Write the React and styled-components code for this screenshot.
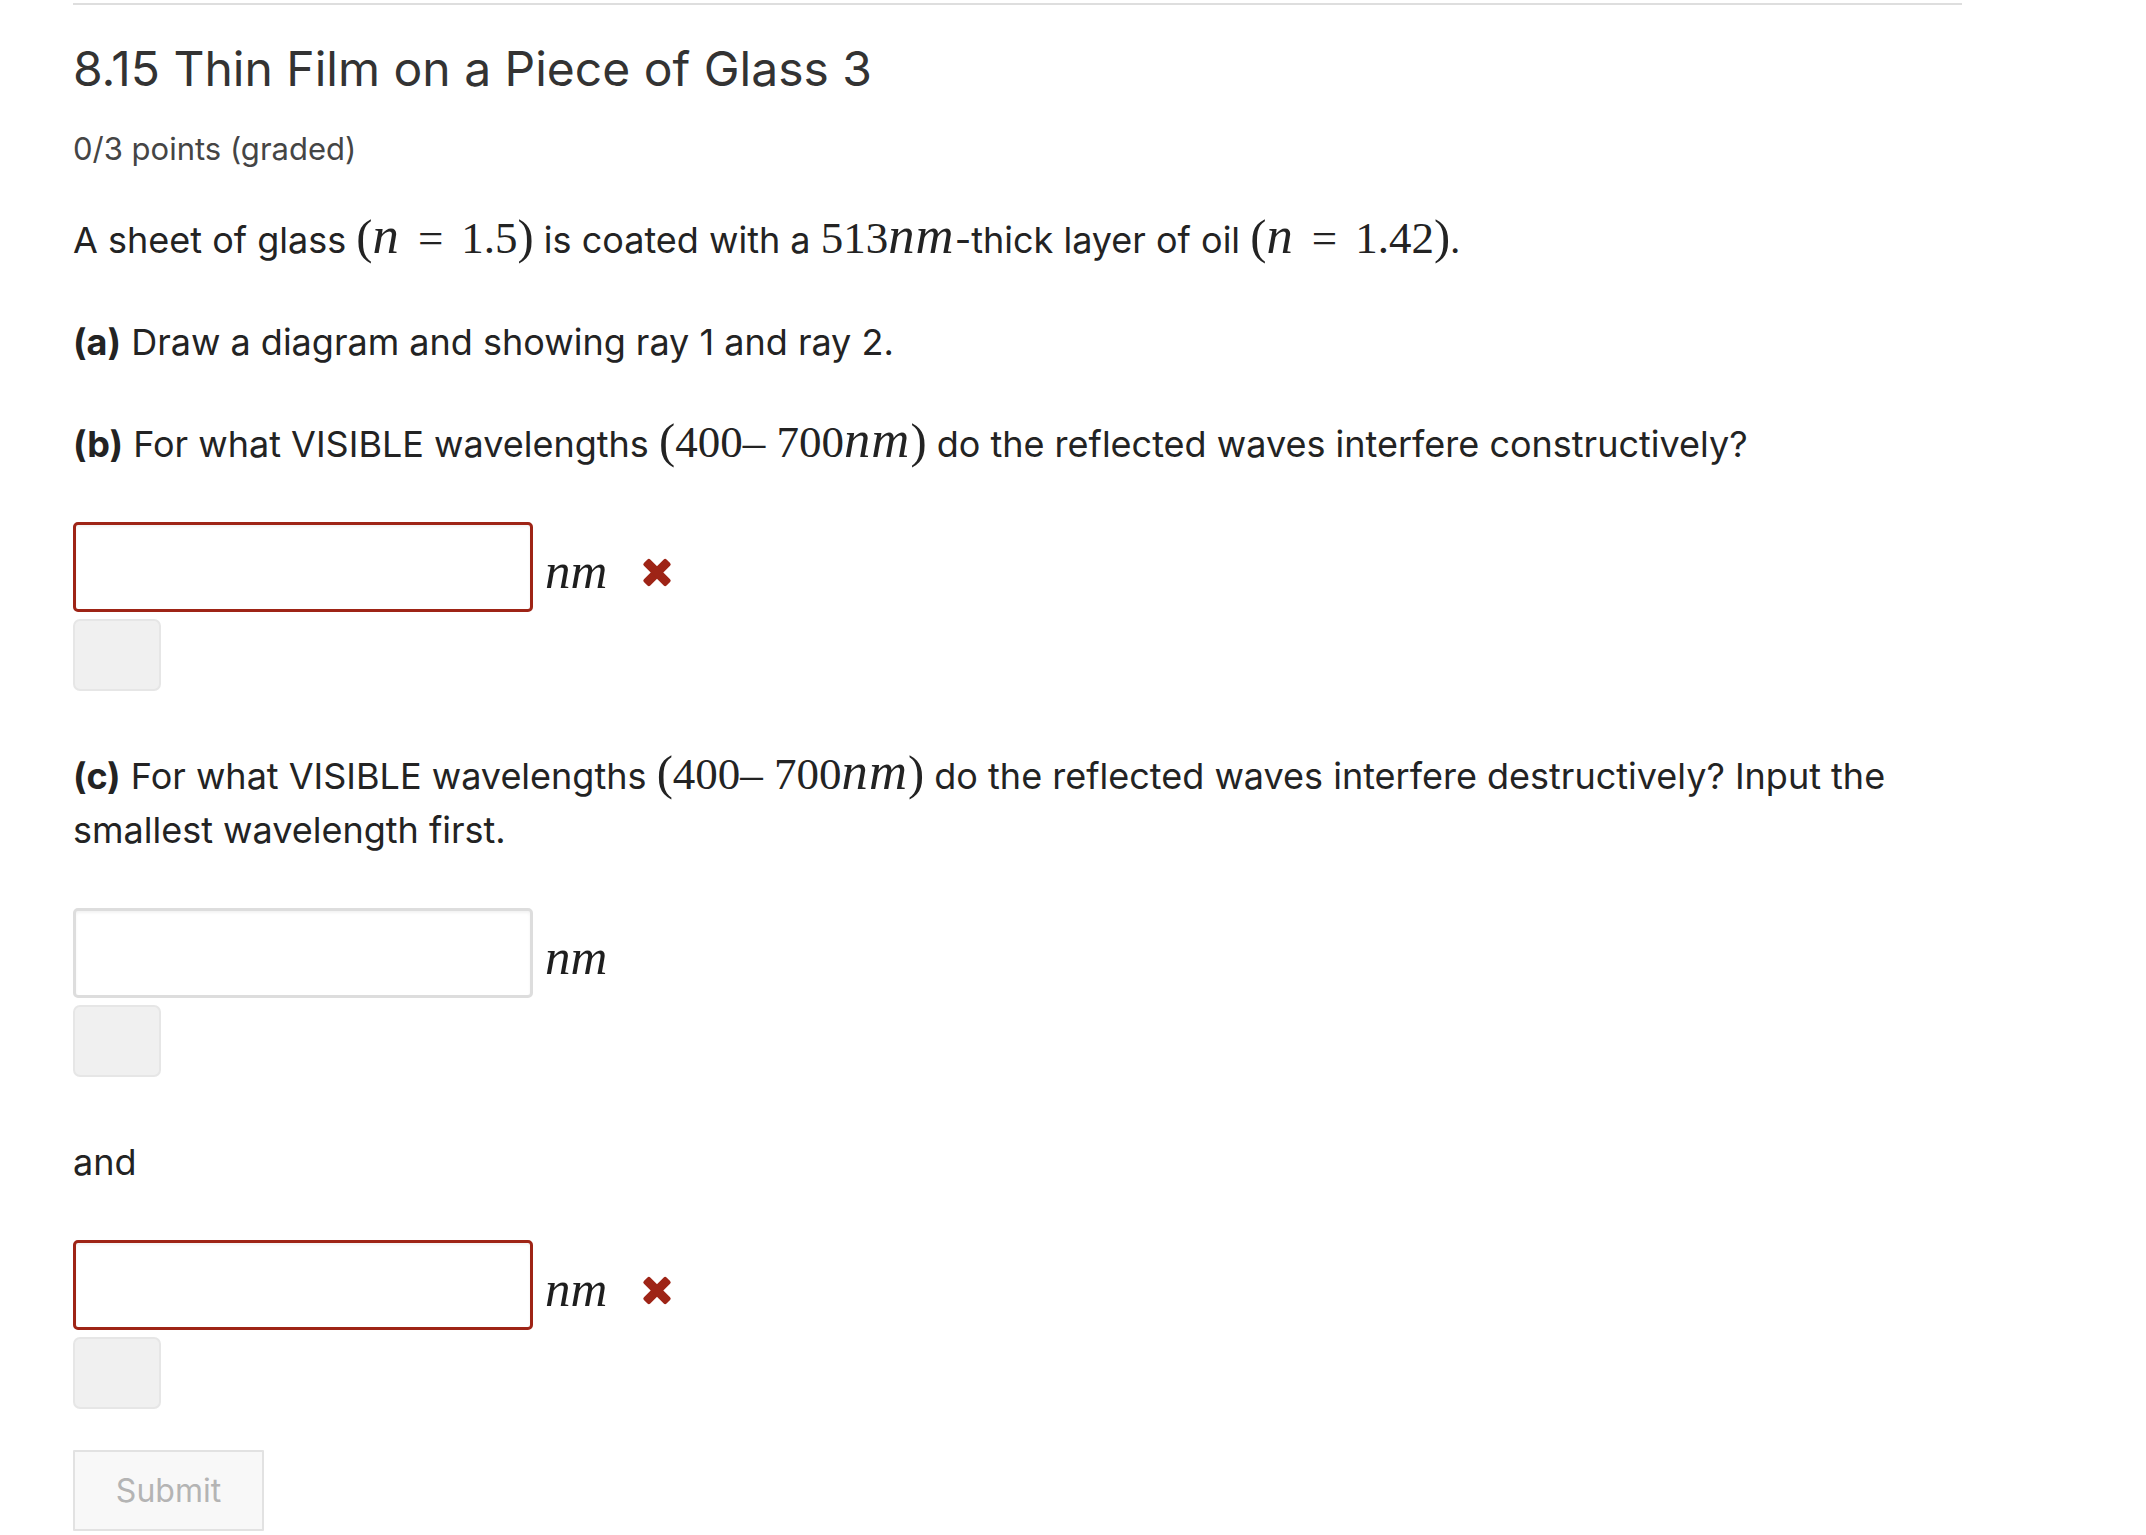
import React from "react"
import styled, { createGlobalStyle } from "styled-components"

const GlobalStyle = createGlobalStyle`
  html, body {
    margin: 0;
    padding: 0;
    background: #ffffff;
  }
  body {
    font-family: Inter, "Noto Sans", "Liberation Sans", sans-serif;
    color: #232323;
  }
`

const Page = styled.div`
  width: 1889px;
  margin-left: 73px;
  padding-top: 3px;
  padding-bottom: 7px;
`

const TopRule = styled.div`
  border-top: 2px solid #dedede;
`

const Title = styled.h2`
  margin: 36px 0 0 0;
  font-size: 48px;
  font-weight: 400;
  line-height: 55px;
  color: #333333;
`

const Points = styled.div`
  margin: 33px 0 45px 0;
  font-size: 31px;
  line-height: 39px;
  color: #454545;
`

const Para = styled.p`
  margin: 0 0 48px 0;
  font-size: 36px;
  line-height: 54px;
  color: #232323;
`

const Label = styled.strong`
  font-weight: 700;
`

const Math = styled.span`
  font-family: "Liberation Serif", "DejaVu Serif", serif;
  font-size: 45px;
  line-height: 1;
  white-space: nowrap;
`

const Var = styled.span`
  font-family: "Liberation Serif", serif;
  font-style: italic;
  font-size: 1.17em;
  line-height: 0;
  letter-spacing: 0.02em;
`

const Paren = styled.span`
  font-size: 1.08em;
  line-height: 0;
`

const Op = styled.span`
  margin: 0 0.4em;
`

const Answer = styled.div`
  margin: 0 0 58px 0;
  padding-top: 3px;
`

const InputRow = styled.div`
  display: flex;
  align-items: center;
`

const TextInput = styled.input`
  box-sizing: border-box;
  width: 460px;
  height: 90px;
  margin: 0;
  padding: 0 14px;
  border: 3px solid ${p => (p.$wrong ? "#9e2416" : "#dddddd")};
  border-radius: 5px;
  background: #ffffff;
  box-shadow: inset 0 2px 3px rgba(0, 0, 0, 0.05);
  font-family: Inter, sans-serif;
  font-size: 30px;
  outline: none;
`

const Unit = styled.span`
  margin-left: 12px;
  padding-top: 8px;
  font-family: "Liberation Serif", "DejaVu Serif", serif;
  font-style: italic;
  font-size: 51px;
  line-height: 1;
  color: #1e1e1e;
`

const WrongMark = styled.svg`
  margin-left: 35px;
  margin-top: 10px;
  width: 30px;
  height: 29px;
  fill: #9e2416;
`

const Status = styled.div`
  box-sizing: border-box;
  width: 88px;
  height: 72px;
  margin-top: 7px;
  background: #f0f0f0;
  border: 2px solid #e6e6e6;
  border-radius: 7px;
`

const SubmitButton = styled.button`
  box-sizing: border-box;
  width: 191px;
  height: 81px;
  margin-top: -17px;
  border: 2px solid #e2e2e2;
  border-radius: 1px;
  background: #f8f8f8;
  color: #b4b4b4;
  font-family: Inter, sans-serif;
  font-size: 32px;
  cursor: default;
`

const Cross = () => (
  <WrongMark viewBox="0 0 30 29">
    <rect x="10.5" y="-1.5" width="9" height="32" rx="2" transform="rotate(45 15 14.5)" />
    <rect x="10.5" y="-1.5" width="9" height="32" rx="2" transform="rotate(-45 15 14.5)" />
  </WrongMark>
)

const Range = () => (
  <Math>
    <Paren>(</Paren>400– 700<Var>nm</Var><Paren>)</Paren>
  </Math>
)

const AnswerField = ({ wrong }) => (
  <Answer>
    <InputRow>
      <TextInput type="text" $wrong={wrong} />
      <Unit>nm</Unit>
      {wrong && <Cross />}
    </InputRow>
    <Status />
  </Answer>
)

const App = () => (
  <Page>
    <GlobalStyle />
    <TopRule />
    <Title>8.15 Thin Film on a Piece of Glass 3</Title>
    <Points>0/3 points (graded)</Points>

    <Para>
      A sheet of glass{" "}
      <Math>
        <Paren>(</Paren><Var>n</Var><Op>=</Op>1.5<Paren>)</Paren>
      </Math>{" "}
      is coated with a <Math>513<Var>nm</Var></Math>-thick layer of oil{" "}
      <Math>
        <Paren>(</Paren><Var>n</Var><Op>=</Op>1.42<Paren>)</Paren>
      </Math>
      .
    </Para>

    <Para>
      <Label>(a)</Label> Draw a diagram and showing ray 1 and ray 2.
    </Para>

    <Para>
      <Label>(b)</Label> For what VISIBLE wavelengths <Range /> do the reflected waves interfere constructively?
    </Para>
    <AnswerField wrong />

    <Para>
      <Label>(c)</Label> For what VISIBLE wavelengths <Range /> do the reflected waves interfere destructively? Input the
      <br />
      smallest wavelength first.
    </Para>
    <AnswerField />

    <Para>and</Para>
    <AnswerField wrong />

    <SubmitButton type="button">Submit</SubmitButton>
  </Page>
)

export default App
